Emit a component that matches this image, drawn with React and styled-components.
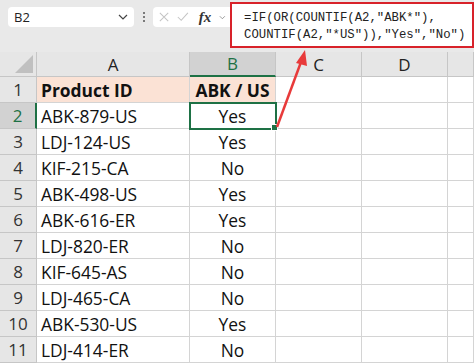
import styled, { createGlobalStyle } from "styled-components";

const GlobalStyle = createGlobalStyle`
  html, body {
    margin: 0;
    padding: 0;
    background: #ffffff;
  }
  body {
    font-family: "Open Sans", "Liberation Sans", sans-serif;
  }
`

const Page = styled.div`
  position: relative;
  width: 474px;
  height: 364px;
  overflow: hidden;
  background: #ffffff;
`

const Toolbar = styled.div`
  display: flex;
  align-items: flex-start;
  height: 52px;
  background: #e9e9e9;
  box-sizing: border-box;
  padding-left: 8px;
`

const NameBox = styled.div`
  display: flex;
  align-items: center;
  justify-content: space-between;
  margin-top: 7px;
  width: 126px;
  height: 20px;
  box-sizing: border-box;
  padding: 0 6px 0 6px;
  background: #ffffff;
  border-radius: 4px;
  font-size: 13px;
  color: #222;
`

const Dots = styled.div`
  display: flex;
  flex-direction: column;
  gap: 2px;
  margin: 12px 8px 0 9px;
  span {
    width: 2px;
    height: 2px;
    background: #555;
    border-radius: 1px;
  }
`

const FxBox = styled.div`
  display: flex;
  align-items: center;
  gap: 8px;
  margin-top: 7px;
  width: 77px;
  height: 20px;
  box-sizing: border-box;
  padding: 0 4px 0 6px;
  background: #ffffff;
  border-radius: 4px 0 0 4px;
`

const Fx = styled.span`
  font-family: "Liberation Serif", serif;
  font-style: italic;
  font-weight: bold;
  font-size: 15px;
  color: #333;
  margin-left: 2px;
`

const FormulaBox = styled.div`
  margin-top: 2px;
  flex: 1;
  height: 46px;
  box-sizing: border-box;
  border: 2px solid #d8222a;
  background: #ffffff;
  padding: 6px 0 0 12px;
  font-family: "Liberation Mono", monospace;
  font-size: 12.3px;
  line-height: 17px;
  color: #222;
  white-space: pre;
`

const Sheet = styled.div`
  display: grid;
  grid-template-columns: 37px 153px 86px 86px 86px 1fr;
  grid-template-rows: 25px repeat(11, 26px);
`

const Corner = styled.div`
  position: relative;
  background: #e6e6e6;
  border-right: 1px solid #c6c6c6;
  border-bottom: 1px solid #c6c6c6;
  &::after {
    content: "";
    position: absolute;
    right: 3px;
    bottom: 3px;
    border-left: 18px solid transparent;
    border-bottom: 18px solid #c0c0c0;
  }
`

const ColHead = styled.div`
  display: flex;
  align-items: center;
  justify-content: center;
  background: ${p => (p.$active ? "#d2d2d2" : "#e6e6e6")};
  border-right: 1px solid #c6c6c6;
  border-bottom: ${p => (p.$active ? "2px solid #1e7145" : "1px solid #c6c6c6")};
  color: ${p => (p.$active ? "#1e7145" : "#222")};
  font-size: 17px;
  box-sizing: border-box;
`

const RowHead = styled.div`
  display: flex;
  align-items: center;
  justify-content: center;
  background: ${p => (p.$active ? "#d2d2d2" : "#e6e6e6")};
  border-right: ${p => (p.$active ? "2px solid #1e7145" : "1px solid #c6c6c6")};
  border-bottom: 1px solid #c6c6c6;
  color: ${p => (p.$active ? "#1e7145" : "#333")};
  font-size: 17px;
  box-sizing: border-box;
`

const Cell = styled.div`
  position: relative;
  display: flex;
  align-items: center;
  justify-content: ${p => (p.$center ? "center" : "flex-start")};
  padding-left: ${p => (p.$center ? "0" : "4px")};
  background: ${p => (p.$head ? "#fbe2d5" : "#ffffff")};
  border-right: 1px solid #d4d4d4;
  border-bottom: 1px solid #d4d4d4;
  font-size: 17.4px;
  font-weight: ${p => (p.$head ? "bold" : "normal")};
  color: #111;
  box-sizing: border-box;
  ${p => p.$selected && `
    outline: 2px solid #1e7145;
    outline-offset: -1px;
    z-index: 1;
    &::after {
      content: "";
      position: absolute;
      right: -3px;
      bottom: -3px;
      width: 5px;
      height: 5px;
      background: #1e7145;
      border: 1px solid #fff;
    }
  `}
`

const Arrow = styled.svg`
  position: absolute;
  left: 0;
  top: 0;
  pointer-events: none;
  z-index: 2;
`

const rows = [
  ["ABK-879-US", "Yes"],
  ["LDJ-124-US", "Yes"],
  ["KIF-215-CA", "No"],
  ["ABK-498-US", "Yes"],
  ["ABK-616-ER", "Yes"],
  ["LDJ-820-ER", "No"],
  ["KIF-645-AS", "No"],
  ["LDJ-465-CA", "No"],
  ["ABK-530-US", "Yes"],
  ["LDJ-414-ER", "No"],
]

export default function App() {
    return (
        <Page>
            <GlobalStyle/>
            <Toolbar>
                <NameBox>
                    <span>B2</span>
                    <svg width="10" height="6" viewBox="0 0 10 6">
                        <path d="M1 1 L5 5 L9 1" fill="none" stroke="#444" strokeWidth="1.2"/>
                    </svg>
                </NameBox>
                <Dots><span/><span/><span/></Dots>
                <FxBox>
                    <svg width="12" height="12" viewBox="0 0 12 12">
                        <path d="M1 1 L11 11 M11 1 L1 11" stroke="#c4c4c4" strokeWidth="1.2"/>
                    </svg>
                    <svg width="14" height="12" viewBox="0 0 14 12">
                        <path d="M1 6 L5 10 L13 1" fill="none" stroke="#c4c4c4" strokeWidth="1.2"/>
                    </svg>
                    <Fx>fx</Fx>
                    <svg width="8" height="5" viewBox="0 0 8 5">
                        <path d="M1 1 L4 4 L7 1" fill="none" stroke="#888" strokeWidth="1"/>
                    </svg>
                </FxBox>
                <FormulaBox>{'=IF(OR(COUNTIF(A2,"ABK*"),\nCOUNTIF(A2,"*US")),"Yes","No")'}</FormulaBox>
            </Toolbar>
            <Sheet>
                <Corner/>
                <ColHead>A</ColHead>
                <ColHead $active>B</ColHead>
                <ColHead>C</ColHead>
                <ColHead>D</ColHead>
                <ColHead/>

                <RowHead>1</RowHead>
                <Cell $head>Product ID</Cell>
                <Cell $head $center>ABK / US</Cell>
                <Cell/>
                <Cell/>
                <Cell/>

                {rows.map(([id, val], i) => (
                    <>
                        <RowHead key={"h" + i} $active={i === 0}>{i + 2}</RowHead>
                        <Cell key={"a" + i}>{id}</Cell>
                        <Cell key={"b" + i} $center $selected={i === 0}>{val}</Cell>
                        <Cell key={"c" + i}/>
                        <Cell key={"d" + i}/>
                        <Cell key={"e" + i}/>
                    </>
                ))}
            </Sheet>
            <Arrow width="474" height="364">
                <line x1="277" y1="127" x2="301" y2="62" stroke="#e83a3a" strokeWidth="2.5"/>
                <polygon points="305,50 296,63 307,66" fill="#e83a3a"/>
            </Arrow>
        </Page>
    )
}
